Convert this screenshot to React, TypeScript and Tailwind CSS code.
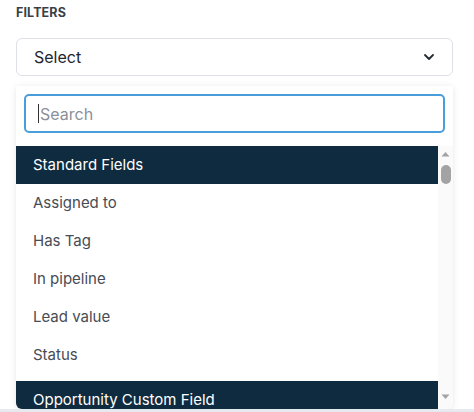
import React from "react";
import { ChevronDown } from "lucide-react";

type Row = { label: string; group?: boolean };

const rows: Row[] = [
  { label: "Standard Fields", group: true },
  { label: "Assigned to" },
  { label: "Has Tag" },
  { label: "In pipeline" },
  { label: "Lead value" },
  { label: "Status" },
];

const App: React.FC = () => {
  return (
    <div
      className="w-[474px] h-[412px] bg-white overflow-hidden flex flex-col"
      style={{ fontFamily: "Inter, 'Noto Sans', sans-serif" }}
    >
      <div className="pl-4 pr-[21px] flex flex-col flex-1 min-h-0">
        <div className="pt-[5px] h-[26px] text-[12.5px] leading-[16px] font-bold tracking-[0.01em] text-[#3a3f47]">
          FILTERS
        </div>

        <div className="mt-[12px] h-[38px] flex items-center justify-between border border-[#dde0e5] rounded-[6px] pl-[17px] pr-[15px]">
          <span className="text-[16px] text-[#1f2530]">Select</span>
          <ChevronDown size={16} strokeWidth={2.75} className="text-[#252a33]" />
        </div>

        {/* dropdown */}
        <div className="mt-[10px] flex-1 min-h-0 flex flex-col bg-white rounded-b-[6px] shadow-[0_1px_6px_rgba(0,0,0,0.10)] overflow-hidden">
          <div className="px-2 pt-2 pb-[13px]">
            <div className="h-[39px] flex items-center border-2 border-[#4a9ddb] rounded-[5px] pl-[12px]">
              <span className="w-px h-[19px] bg-[#333] mr-[1px]" />
              <span className="text-[16px] text-[#8a9099]">Search</span>
            </div>
          </div>

          <div className="flex flex-1 min-h-0">
            <div className="flex-1 min-w-0 flex flex-col overflow-hidden">
              {rows.map((r) => (
                <div
                  key={r.label}
                  className={
                    r.group
                      ? "h-[38px] shrink-0 flex items-center pl-[17px] bg-[#0f2b40] text-white text-[15px]"
                      : "h-[38px] shrink-0 flex items-center pl-[17px] text-[#474c55] text-[15px]"
                  }
                >
                  {r.label}
                </div>
              ))}
              <div className="h-[7px] shrink-0" />
              <div className="h-[38px] shrink-0 flex items-center pl-[17px] bg-[#0f2b40] text-white text-[15px] rounded-bl-[6px]">
                Opportunity Custom Field
              </div>
            </div>

            {/* scrollbar */}
            <div className="w-[15px] shrink-0 bg-[#fafafa] flex flex-col items-center">
              <svg width="9" height="6" viewBox="0 0 9 6" className="mt-[5px]">
                <path d="M0.5 5.5 L4.5 1 L8.5 5.5 Z" fill="#a3a3a3" />
              </svg>
              <div className="mt-[8px] w-[10px] h-[19px] rounded-full bg-[#a3a3a3]" />
              <div className="flex-1" />
              <svg width="9" height="6" viewBox="0 0 9 6" className="mb-[9px]">
                <path d="M0.5 0.5 L8.5 0.5 L4.5 5 Z" fill="#a3a3a3" />
              </svg>
            </div>
          </div>
        </div>
      </div>
      <div className="h-[3px] shrink-0 bg-[#e6e9ed]" />
    </div>
  );
};

export default App;
